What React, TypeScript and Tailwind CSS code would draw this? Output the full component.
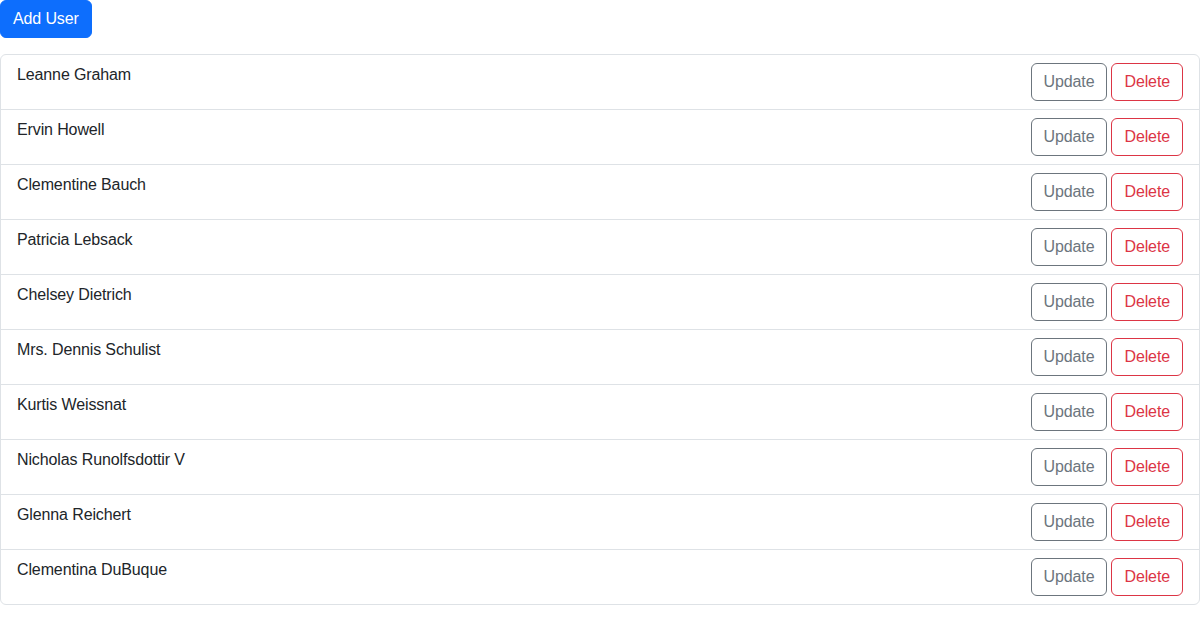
const users = [
  "Leanne Graham",
  "Ervin Howell",
  "Clementine Bauch",
  "Patricia Lebsack",
  "Chelsey Dietrich",
  "Mrs. Dennis Schulist",
  "Kurtis Weissnat",
  "Nicholas Runolfsdottir V",
  "Glenna Reichert",
  "Clementina DuBuque",
];

function App() {
  return (
    <div className="font-['Liberation_Sans',Arial,sans-serif] text-[16px] leading-6 tracking-[-0.12px] text-[#212529] bg-white min-h-screen">
      <button className="bg-[#0d6efd] text-white px-3 py-[6px] rounded-md border border-[#0d6efd] leading-6">
        Add User
      </button>
      <ul className="mt-4 border border-[#dee2e6] rounded-md">
        {users.map((name, i) => (
          <li
            key={name}
            className={
              "flex justify-between items-start px-4 py-2 " +
              (i > 0 ? "border-t border-[#dee2e6]" : "")
            }
          >
            <span>{name}</span>
            <div className="flex gap-1">
              <button className="border border-[#6c757d] text-[#6c757d] px-3 py-[6px] rounded-md leading-6">
                Update
              </button>
              <button className="border border-[#dc3545] text-[#dc3545] px-3 py-[6px] rounded-md leading-6">
                Delete
              </button>
            </div>
          </li>
        ))}
      </ul>
    </div>
  );
}

export default App;
